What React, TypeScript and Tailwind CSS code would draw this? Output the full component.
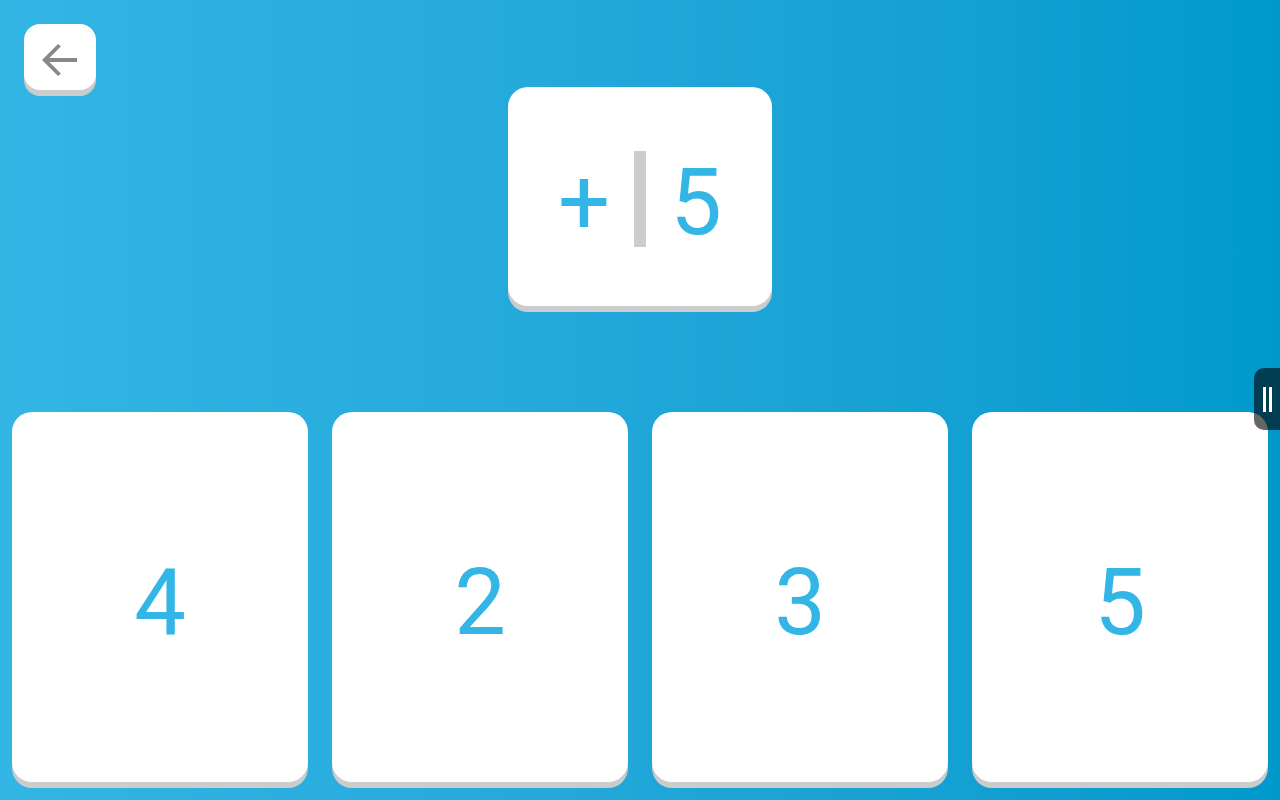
import React from "react";

const cards = ["4", "2", "3", "5"];

export default function App() {
  return (
    <div
      className="relative w-[1280px] h-[800px] overflow-hidden bg-gradient-to-r from-[#33b5e5] to-[#0099cc]"
      style={{ fontFamily: "Roboto, 'Liberation Sans', sans-serif" }}
    >
      <div className="grid grid-cols-[1fr_auto_1fr]">
        <div className="pt-[24px] pl-[24px]">
          <button className="w-[72px] h-[66px] rounded-[16px] bg-white shadow-[0_6px_0_#cccccc] flex items-center justify-center">
            <svg width="36" height="32" viewBox="0 0 36 32" fill="none" className="mt-[6px]">
              <path d="M2 16H35" stroke="#888888" strokeWidth="3.8" />
              <path d="M17.5 1.2L2.7 16L17.5 30.8" stroke="#888888" strokeWidth="3.8" fill="none" />
            </svg>
          </button>
        </div>
        <div className="pt-[87px]">
          <div className="w-[264px] h-[219px] rounded-[20px] bg-white shadow-[0_6px_0_#cccccc] flex items-center justify-center">
            <span className="text-[92px] leading-none text-[#33b5e5] mr-[24px] mt-[13px]">+</span>
            <span className="w-[12px] h-[96px] bg-[#cccccc] mt-[5px]" />
            <span className="text-[92px] leading-none text-[#33b5e5] ml-[24px] mt-[13px]">5</span>
          </div>
        </div>
        <div />
      </div>

      <div className="mt-[106px] px-[12px] flex gap-[24px]">
        {cards.map((c, i) => (
          <div
            key={i}
            className="w-[296px] h-[370px] rounded-[20px] bg-white shadow-[0_6px_0_#cccccc] flex items-center justify-center"
          >
            <span className="text-[92px] leading-none text-[#33b5e5] mt-[12px]">{c}</span>
          </div>
        ))}
      </div>

      <div className="absolute right-0 top-[368px] w-[26px] h-[62px] rounded-l-[10px] bg-black/60 flex items-center justify-center gap-[3px]">
        <span className="w-[3px] h-[25px] bg-white" />
        <span className="w-[3px] h-[25px] bg-white" />
      </div>
    </div>
  );
}
